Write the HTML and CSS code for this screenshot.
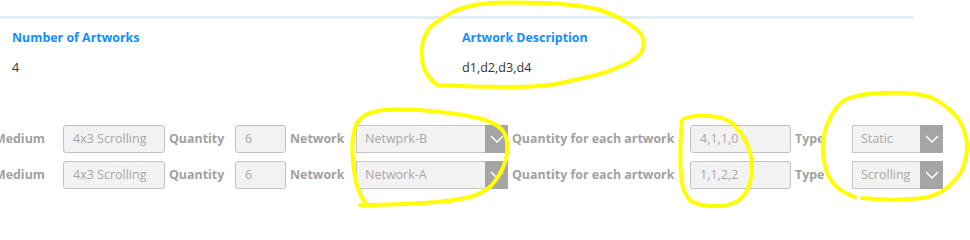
FILE: index.html
```html
<!DOCTYPE html>
<html>
<head>
<meta charset="utf-8">
<link rel="stylesheet" href="styles.css">
</head>
<body>
<div class="page">
  <div class="rule"></div>
  <div class="summary">
    <div class="field">
      <div class="field-label">Number of Artworks</div>
      <div class="field-value">4</div>
    </div>
    <div class="field">
      <div class="field-label">Artwork Description</div>
      <div class="field-value">d1,d2,d3,d4</div>
    </div>
  </div>
  <div class="rows">
    <div class="row">
      <span class="lbl lbl-medium">Medium</span>
      <div class="inp inp-medium">4x3 Scrolling</div>
      <span class="lbl lbl-qty">Quantity</span>
      <div class="inp inp-qty">6</div>
      <span class="lbl lbl-net">Network</span>
      <div class="sel sel-net"><span class="sel-text">Netwprk-B</span><span class="sel-btn"><svg width="14" height="8" viewBox="0 0 14 8"><path d="M1 1 L7 7 L13 1" fill="none" stroke="#fff" stroke-width="1.5"/></svg></span></div>
      <span class="lbl lbl-each">Quantity for each artwork</span>
      <div class="inp inp-each">4,1,1,0</div>
      <span class="lbl lbl-type">Type</span>
      <div class="sel sel-type"><span class="sel-text">Static</span><span class="sel-btn"><svg width="14" height="8" viewBox="0 0 14 8"><path d="M1 1 L7 7 L13 1" fill="none" stroke="#fff" stroke-width="1.5"/></svg></span></div>
    </div>
    <div class="row">
      <span class="lbl lbl-medium">Medium</span>
      <div class="inp inp-medium">4x3 Scrolling</div>
      <span class="lbl lbl-qty">Quantity</span>
      <div class="inp inp-qty">6</div>
      <span class="lbl lbl-net">Network</span>
      <div class="sel sel-net"><span class="sel-text">Network-A</span><span class="sel-btn"><svg width="14" height="8" viewBox="0 0 14 8"><path d="M1 1 L7 7 L13 1" fill="none" stroke="#fff" stroke-width="1.5"/></svg></span></div>
      <span class="lbl lbl-each">Quantity for each artwork</span>
      <div class="inp inp-each">1,1,2,2</div>
      <span class="lbl lbl-type">Type</span>
      <div class="sel sel-type"><span class="sel-text">Scrolling</span><span class="sel-btn"><svg width="14" height="8" viewBox="0 0 14 8"><path d="M1 1 L7 7 L13 1" fill="none" stroke="#fff" stroke-width="1.5"/></svg></span></div>
    </div>
  </div>
  <svg class="marks" width="970" height="217" viewBox="0 0 970 217">
    <path d="M435,83 C427,77 422,67 422,57 C421,47 423,30 437,22 C447,14 455,10 470,6 C485,2 515,2 543,3 C565,4 585,6 600,10 C615,15 632,24 640,33 C646,40 644,52 637,57 C630,63 618,68 603,73 C590,77 578,79 565,82 C550,86 530,87 510,87 C480,87 455,86 437,85"/>
    <path d="M360,205 C380,205 405,204 423,203 C440,202 458,200 470,197 C480,194 487,190 492,185 C500,176 506,163 507,153 C508,143 507,136 503,131 C498,125 490,120 473,117 C460,114 450,113 440,112 C420,110 400,109 385,110 C372,111 362,115 357,123 C352,133 352,150 353,160 C354,175 357,188 361,196 C363,200 365,202 365,202"/>
    <path d="M682,121 C683,117 695,115 710,116 C722,117 730,120 735,126 C742,133 747,142 750,152 C753,165 752,177 749,186 C746,194 742,199 736,202 C728,206 722,206 714,206 C705,206 697,205 691,201 C685,196 682,187 681,176 C680,160 680,140 682,121"/>
    <path d="M862,198 C880,200 905,200 923,198 C935,196 942,192 948,187 C956,180 962,172 964,165 C967,155 968,146 966,138 C964,128 960,120 954,114 C947,107 940,101 930,97 C918,93 900,92 880,93 C865,94 852,96 845,100 C838,104 834,110 830,118 C825,128 822,140 823,153 C824,166 827,175 832,182 C838,189 845,194 855,197"/>
  </svg>
</div>
</body>
</html>
```

FILE: styles.css
```css
html, body {
  margin: 0;
  padding: 0;
  background: #ffffff;
}

.page {
  position: relative;
  width: 970px;
  height: 217px;
  overflow: hidden;
  font-family: "Open Sans", "Noto Sans", sans-serif;
  font-size: 12.6px;
}

.rule {
  margin-top: 16px;
  width: 913px;
  height: 3px;
  background: #e3eef4;
}

.summary {
  display: grid;
  grid-template-columns: 450px 1fr;
  padding-left: 12px;
  margin-top: 10px;
}

.field-label {
  font-weight: 700;
  font-size: 12.4px;
  color: #178cff;
  line-height: 18px;
}

.field-value {
  margin-top: 12px;
  line-height: 18px;
  color: #333333;
}

.rows {
  margin-top: 48px;
  margin-left: -6px;
  display: flex;
  flex-direction: column;
  gap: 8px;
}

.row {
  display: flex;
  align-items: center;
  height: 28px;
}

.lbl {
  box-sizing: border-box;
  flex: none;
  font-weight: 700;
  font-size: 12.4px;
  color: #a1a1a1;
  padding-left: 4px;
  white-space: nowrap;
  line-height: 18px;
}

.lbl-medium { width: 69px; padding-left: 0; }
.lbl-qty { width: 70px; }
.lbl-net { width: 70px; }
.lbl-each { width: 182px; }
.lbl-type { width: 61px; }

.inp {
  box-sizing: border-box;
  flex: none;
  height: 28px;
  border: 1px solid #c2c2c2;
  border-radius: 3px;
  background: #f2f2f2;
  color: #a8a8a8;
  font-size: 12.5px;
  padding-left: 9px;
  line-height: 26px;
  white-space: nowrap;
}

.inp-medium { width: 102px; }
.inp-qty { width: 51px; }
.inp-each { width: 101px; }

.sel {
  box-sizing: border-box;
  flex: none;
  height: 28px;
  display: flex;
  border: 1px solid #c6c6c6;
  background: #f2f2f2;
  color: #a8a8a8;
  font-size: 12.5px;
}

.sel-net { width: 152px; }
.sel-type { width: 91px; }

.sel-text {
  flex: 1;
  padding-left: 8px;
  line-height: 26px;
  white-space: nowrap;
}

.sel-btn {
  flex: none;
  width: 23px;
  margin: -1px -1px -1px 0;
  background: #a5a5a5;
  display: flex;
  align-items: center;
  justify-content: center;
}

.marks {
  position: absolute;
  left: 0;
  top: 0;
  pointer-events: none;
}

.marks path {
  fill: none;
  stroke: #ffff00;
  stroke-width: 4;
  stroke-linecap: round;
  stroke-linejoin: round;
}
```
